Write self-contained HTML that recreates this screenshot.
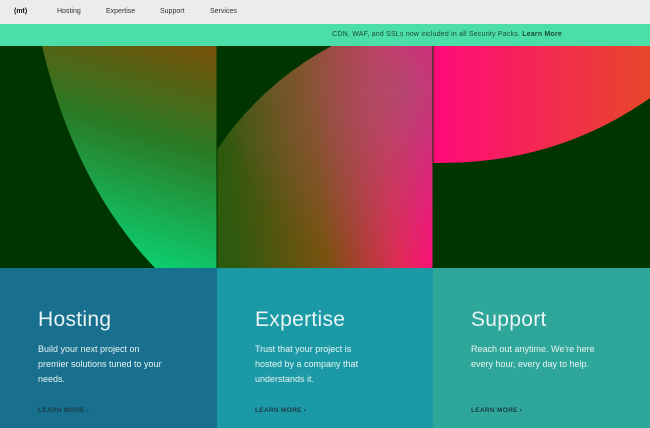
<!DOCTYPE html><html><head><style>
html,body{margin:0;width:650px;height:428px;overflow:hidden}
body{font-family:"Liberation Sans",sans-serif;position:relative}
.nav{height:24px;background:#ececec;position:relative;font-size:7px;color:#333;}
.nav span{position:absolute;top:8px;}
.ban{height:22px;background:#4cdea8;font-size:7px;color:#1e4a3a;position:relative}
.ban span{position:absolute;right:88px;top:7px;letter-spacing:.2px}
.p{position:absolute;top:268px;height:160px;color:#e8f4f4;overflow:hidden}
.p h2{font-weight:300;font-size:21px;margin:0;position:absolute;top:40px;left:38px;letter-spacing:.3px}
.p p{position:absolute;top:74px;left:38px;margin:0;font-size:9px;line-height:15px;white-space:nowrap;font-weight:300}
.p b{position:absolute;top:139px;left:38px;font-size:6.5px;color:#1b3a45;letter-spacing:.3px}
</style></head><body>
<div class="nav"><span style="left:14px;font-weight:bold;color:#111">(mt)</span><span style="left:57px">Hosting</span><span style="left:106px">Expertise</span><span style="left:160px">Support</span><span style="left:210px">Services</span></div>
<div class="ban"><span>CDN, WAF, and SSLs now included in all Security Packs. <strong>Learn More</strong></span></div>
<svg width="650" height="222" style="position:absolute;top:46px;left:0" viewBox="0 46 650 222">
<defs>
<linearGradient id="g1" x1="217" y1="46" x2="150" y2="268" gradientUnits="userSpaceOnUse"><stop offset="0" stop-color="#7a5008"/><stop offset=".45" stop-color="#2a7a24"/><stop offset="1" stop-color="#0cd070"/></linearGradient>
<linearGradient id="g2" x1="230" y1="220" x2="433" y2="200" gradientUnits="userSpaceOnUse"><stop offset="0" stop-color="#2e5a0e"/><stop offset=".45" stop-color="#7a5210"/><stop offset=".8" stop-color="#e02a55"/><stop offset="1" stop-color="#ff0a80"/></linearGradient>
<radialGradient id="g2b" cx="400" cy="90" r="180" gradientUnits="userSpaceOnUse"><stop offset="0" stop-color="#9a5a70" stop-opacity=".7"/><stop offset="1" stop-color="#9a5a70" stop-opacity="0"/></radialGradient>
<linearGradient id="g3" x1="433" y1="0" x2="650" y2="0" gradientUnits="userSpaceOnUse"><stop offset="0" stop-color="#ff0a7a"/><stop offset="1" stop-color="#e8472a"/></linearGradient>
<clipPath id="c2"><rect x="217" y="46" width="216" height="222"/></clipPath>
</defs>
<rect x="0" y="46" width="650" height="222" fill="#013500"/>
<path d="M42 46 Q75 185 155 268 L217 268 L217 46 Z" fill="url(#g1)"/>
<g clip-path="url(#c2)">
<circle cx="480" cy="325" r="316" fill="url(#g2)"/>
<circle cx="480" cy="325" r="316" fill="url(#g2b)"/>
</g>
<path d="M433 46 L433 163 Q555 165 650 98 L650 46 Z" fill="url(#g3)"/>
<line x1="217" y1="46" x2="217" y2="268" stroke="#013500" stroke-width="1"/>
<line x1="433" y1="46" x2="433" y2="268" stroke="#013500" stroke-width="1"/>
</svg>
<div class="p" style="left:0;width:217px;background:#19708e"><h2>Hosting</h2><p>Build your next project on<br>premier solutions tuned to your<br>needs.</p><b>LEARN MORE ›</b></div>
<div class="p" style="left:217px;width:216px;background:#1b9aa6"><h2>Expertise</h2><p>Trust that your project is<br>hosted by a company that<br>understands it.</p><b>LEARN MORE ›</b></div>
<div class="p" style="left:433px;width:217px;background:#2ea79a"><h2>Support</h2><p>Reach out anytime. We're here<br>every hour, every day to help.</p><b>LEARN MORE ›</b></div>
</body></html>
